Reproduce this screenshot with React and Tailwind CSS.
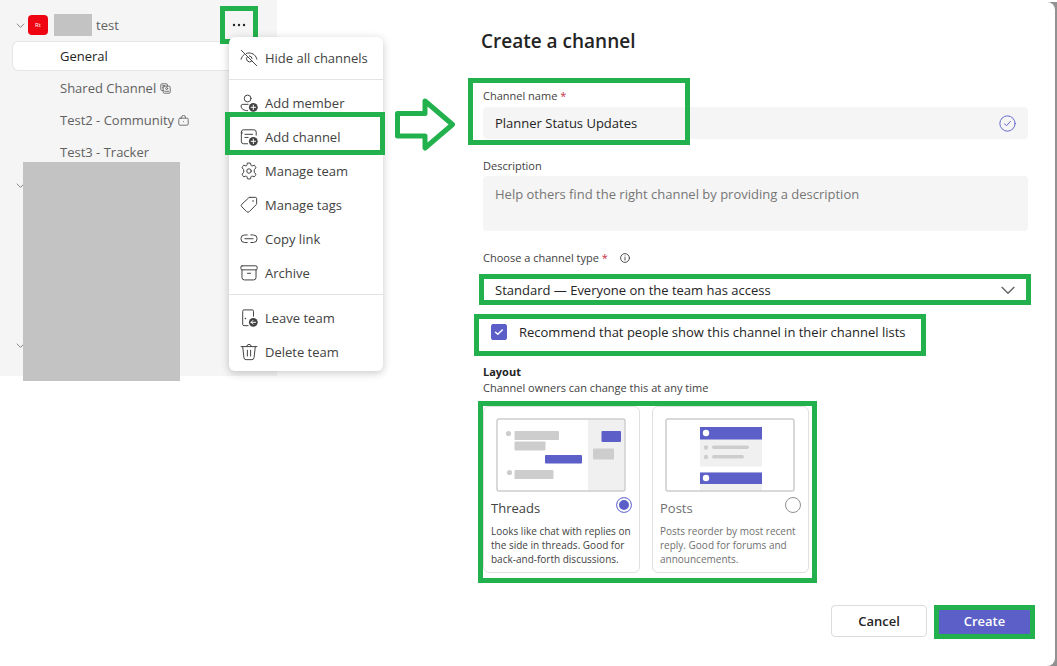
import { useState } from "react";

const FRAME = "pointer-events-none absolute border-5 border-[#22b14c]";

function Frame({ className }) {
  return <span aria-hidden="true" className={`${FRAME} ${className}`} />;
}

function Icon({ children, className = "size-[18px]", width = 1.1, box = "0 0 20 20" }) {
  return (
    <svg
      viewBox={box}
      className={`shrink-0 ${className}`}
      fill="none"
      stroke="currentColor"
      strokeWidth={width}
      strokeLinecap="round"
      strokeLinejoin="round"
      aria-hidden="true"
    >
      {children}
    </svg>
  );
}

function Chevron({ className }) {
  return (
    <Icon className={className} box="0 0 12 12" width={1}>
      <path d="M1.5 4 6 8.5 10.5 4" />
    </Icon>
  );
}

const icons = {
  hide: (
    <Icon>
      <path d="M1.5 1.5l17 17M7.1 4.9A9.5 9.5 0 0 1 10 4.4c4.600 0 7.800 3 8.800 7M4.600 6.300C2.900 7.500 1.700 9.300 1.200 11.400M8.200 8.300a3.500 3.500 0 1 0 5 5M10.500 7.600a3.500 3.500 0 0 1 3 3" />
    </Icon>
  ),
  member: (
    <Icon>
      <circle cx="8.500" cy="5" r="3.800" />
      <path d="M9 11.500H3A1.800 1.800 0 0 0 1.200 13.300c0 3.300 3 5.200 7.300 5.200" />
      <circle cx="14.800" cy="14.800" r="4.900" fill="currentColor" stroke="none" />
      <path d="M14.800 12.300v5M12.300 14.800h5" stroke="white" />
    </Icon>
  ),
  channel: (
    <Icon>
      <path d="M8.500 17.500H4A2.500 2.500 0 0 1 1.500 15V4.500A2.500 2.500 0 0 1 4 2h11.500A2.500 2.500 0 0 1 18 4.500V8M1.500 5.500H3M5.500 7h8.500M5.500 10.500H9" />
      <circle cx="14.800" cy="14.800" r="4.900" fill="currentColor" stroke="none" />
      <path d="M14.800 12.300v5M12.300 14.800h5" stroke="white" />
    </Icon>
  ),
  gear: (
    <Icon>
      <path d="M8.300 1.300Q10 .9 11.700 1.300L12.200 3.500Q12.500 4.500 13.600 4.300L15.900 3.500Q17.200 4.800 17.700 6.500L16.100 8.200Q15.400 10 16.100 11.800L17.700 13.500Q17.200 15.200 15.900 16.500L13.600 15.700Q12.500 15.500 12.200 16.500L11.700 18.700Q10 19.100 8.300 18.700L7.800 16.500Q7.500 15.500 6.400 15.700L4.100 16.500Q2.800 15.200 2.300 13.500L3.900 11.800Q4.600 10 3.900 8.200L2.300 6.500Q2.800 4.800 4.100 3.500L6.400 4.300Q7.500 4.500 7.800 3.500Z" />
      <circle cx="10" cy="10" r="2.500" />
    </Icon>
  ),
  tag: (
    <Icon>
      <path d="M11 1.500h6A1.500 1.500 0 0 1 18.500 3v5.300a2 2 0 0 1-.6 1.400l-7.600 7.700a2 2 0 0 1-2.800 0L2 12a2 2 0 0 1 0-2.800L9.600 2.100a2 2 0 0 1 1.400-.6Z" />
      <circle cx="14.500" cy="5.500" r=".9" fill="currentColor" stroke="none" />
    </Icon>
  ),
  link: (
    <Icon>
      <path d="M8 5.500H5.200a4.200 4.200 0 0 0 0 8.400H8M12 5.500h2.800a4.200 4.200 0 0 1 0 8.400H12M5.500 9.700h9" />
    </Icon>
  ),
  archive: (
    <Icon>
      <rect x="1" y="2" width="18" height="4.500" rx="1.300" />
      <path d="M2.200 6.500V15a2.700 2.700 0 0 0 2.700 2.700h10.200a2.700 2.700 0 0 0 2.700-2.700V6.500M8.300 10.300h3.400" />
    </Icon>
  ),
  leave: (
    <Icon>
      <path d="M9 18.500H4.500A1.500 1.500 0 0 1 3 17V2.500A1.500 1.500 0 0 1 4.500 1h9A1.500 1.500 0 0 1 15 2.500V8" />
      <circle cx="6" cy="10.500" r=".9" fill="currentColor" stroke="none" />
      <circle cx="14.800" cy="14.800" r="4.900" fill="currentColor" stroke="none" />
      <path d="M17.300 14.800h-5m2-2-2 2 2 2" stroke="white" />
    </Icon>
  ),
  trash: (
    <Icon>
      <path d="M1.200 4h17.600M7.500 4a2.500 2.500 0 0 1 5 0M3 4l1.400 12.300A2.400 2.400 0 0 0 6.800 18.500h6.400a2.400 2.400 0 0 0 2.400-2.200L17 4M8.200 8v6.500M11.800 8v6.500" />
    </Icon>
  ),
};

const menuGroups = [
  [{ icon: "hide", label: "Hide all channels" }],
  [
    { icon: "member", label: "Add member" },
    { icon: "channel", label: "Add channel", framed: true },
    { icon: "gear", label: "Manage team" },
    { icon: "tag", label: "Manage tags" },
    { icon: "link", label: "Copy link" },
    { icon: "archive", label: "Archive" },
  ],
  [
    { icon: "leave", label: "Leave team" },
    { icon: "trash", label: "Delete team" },
  ],
];

function TeamMenu() {
  return (
    <div
      role="menu"
      className="absolute top-[37px] left-[229px] w-[154px] rounded-md bg-white pt-1 pb-0.5 text-[#424242] shadow-[0_2px_8px_rgba(0,0,0,0.22)]"
    >
      {menuGroups.map((group, i) => (
        <div key={i} className={i ? "mt-1 border-t border-[#e3e3e3] pt-1.5" : ""}>
          {group.map((item) => (
            <button
              key={item.label}
              role="menuitem"
              className="relative flex h-[34px] w-full items-center gap-[7px] pl-[11px] text-left whitespace-nowrap"
            >
              {icons[item.icon]}
              {item.label}
              {item.framed && <Frame className="-top-2 -right-0.5 -bottom-px -left-1" />}
            </button>
          ))}
        </div>
      ))}
    </div>
  );
}

function ChannelLink({ label, icon, active }) {
  return (
    <a
      href="#"
      className={`ml-3 flex items-center gap-1 pl-[47px] ${
        active
          ? "my-px h-[30px] rounded-l-md border border-r-0 border-[#e6e6e6] bg-white text-[#242424]"
          : "h-8 border-l border-transparent"
      }`}
    >
      {label}
      {icon}
    </a>
  );
}

function Sidebar() {
  return (
    <div className="relative h-[376px] w-[388px] shrink-0 bg-white">
      <nav aria-label="Teams" className="h-full w-[277px] bg-[#f5f5f5] pt-2.5 text-[#616161]">
        <div className="flex h-[30px] items-center pl-4">
          <Chevron className="size-[9px]" />
          <span className="ml-[3px] flex size-5 items-center justify-center rounded bg-[#ee0511] text-[6px] text-white">
            Rt
          </span>
          <span className="ml-[6px] h-[22px] w-[38px] bg-[#c3c3c3]" />
          <span className="ml-1">test</span>
          <button aria-label="More options" className="relative ml-auto mr-[30px] h-6 w-4 text-[#242424]">
            <svg viewBox="0 0 16 4" className="w-4" fill="currentColor" aria-hidden="true">
              <circle cx="3" cy="2" r="1.200" />
              <circle cx="8" cy="2" r="1.200" />
              <circle cx="13" cy="2" r="1.200" />
            </svg>
            <Frame className="-inset-x-[11px] -inset-y-[7px]" />
          </button>
        </div>
        <ChannelLink label="General" active />
        <ChannelLink
          label="Shared Channel"
          icon={
            <Icon className="size-[11px]" box="0 0 14 14">
              <path d="M4 9.500H2.500a1.500 1.500 0 0 1-1.500-1.500V2.500A1.500 1.500 0 0 1 2.500 1H8a1.500 1.500 0 0 1 1.500 1.500V4M3 3.500h3" />
              <rect x="4" y="4" width="9" height="9" rx="1.500" />
              <circle cx="8.500" cy="7" r="1.300" />
              <path d="M6 10.500h5M3 6h1" />
            </Icon>
          }
        />
        <ChannelLink
          label="Test2 - Community"
          icon={
            <Icon className="size-[11px]" box="0 0 14 14">
              <rect x="1" y="4" width="12" height="9" rx="1.700" />
              <path d="M4.500 4V3a2.500 2.500 0 0 1 5 0v1M7 8.500h.1" />
            </Icon>
          }
        />
        <ChannelLink label="Test3 - Tracker" />
        <Chevron className="absolute top-[181px] left-4 size-[9px]" />
        <Chevron className="absolute top-[341px] left-4 size-[9px]" />
        <span className="absolute top-[162px] left-[23px] h-[219px] w-[157px] bg-[#c3c3c3]" />
      </nav>
      <TeamMenu />
      <svg viewBox="0 0 62 56" className="absolute top-[96px] left-[394px] h-14 w-[62px]" aria-hidden="true">
        <path
          d="M3.500 17.500H31V5L58.500 28.500 31 52V40H3.500Z"
          fill="none"
          stroke="#22b14c"
          strokeWidth="5"
          strokeLinejoin="round"
        />
      </svg>
    </div>
  );
}

function ThreadsArt() {
  return (
    <svg viewBox="0 0 130 74" className="h-[74px] w-[130px]" aria-hidden="true">
      <rect x="1" y="1" width="128" height="72" rx="2" fill="white" />
      <path d="M92 1h36v72H92Z" fill="#f0f0f0" />
      <g fill="#cdcdcd">
        <circle cx="12.500" cy="15.500" r="2.600" />
        <rect x="18.500" y="13" width="44.500" height="9" rx="1" />
        <rect x="18.500" y="23.500" width="31" height="9" rx="1" />
        <rect x="97" y="30.500" width="21" height="11" rx="1" />
        <circle cx="13.500" cy="54.500" r="2.600" />
        <rect x="18.500" y="52" width="39" height="9" rx="1" />
      </g>
      <rect x="105.500" y="13" width="19.500" height="11" rx="1" fill="#5b5fc7" />
      <rect x="49" y="37" width="37" height="8.500" rx="1" fill="#5b5fc7" />
      <rect x="1" y="1" width="128" height="72" rx="2" fill="none" stroke="#cdcdcd" strokeWidth="1.500" />
    </svg>
  );
}

function PostsArt() {
  return (
    <svg viewBox="0 0 130 74" className="h-[74px] w-[130px]" aria-hidden="true">
      <path d="M35 9h62v39.500H35ZM35 54h62v19H35Z" fill="#f0f0f0" />
      <path d="M35 9h62v12.500H35ZM35 54.500h62v11.500H35Z" fill="#5b5fc7" />
      <circle cx="41" cy="15" r="3.200" fill="white" />
      <circle cx="41" cy="60" r="3.200" fill="white" />
      <g fill="#cdcdcd">
        <circle cx="41" cy="29.500" r="2.200" />
        <circle cx="41" cy="39" r="2.200" />
        <rect x="47" y="27.500" width="37" height="3.500" rx="1.700" />
        <rect x="47" y="37" width="32" height="3.500" rx="1.700" />
      </g>
      <rect x="1" y="1" width="128" height="72" rx="2" fill="none" stroke="#cdcdcd" strokeWidth="1.500" />
    </svg>
  );
}

function LayoutCard({ value, title, text, art, checked, onChange }) {
  return (
    <label
      className={`block h-[167px] w-[157px] rounded-md border border-[#e0e0e0] pt-[11px] pl-[7px] ${
        checked ? "text-[#424242]" : "text-[#707070]"
      }`}
    >
      <span className="block pl-[5px]">{art}</span>
      <span className="flex items-start justify-between pt-[3px] pr-[7px]">
        <span className="pt-[3px] leading-5">{title}</span>
        <input
          type="radio"
          name="layout"
          value={value}
          checked={checked}
          onChange={onChange}
          className="mt-0.5 size-4 appearance-none rounded-full border border-[#919191] bg-white checked:border-[#7b7fd6] checked:bg-[#5b5fc7] checked:shadow-[inset_0_0_0_2px_white]"
        />
      </span>
      <span className="block pt-1.5 text-[10px] leading-[14px] whitespace-pre-line">{text}</span>
    </label>
  );
}

function CreateChannel() {
  const [name, setName] = useState("Planner Status Updates");
  const [layout, setLayout] = useState("threads");
  return (
    <form
      onSubmit={(e) => e.preventDefault()}
      className="flex min-w-0 flex-1 flex-col pt-[25px] pr-[27px] pb-[26px] pl-[95px] text-[#242424]"
    >
      <h1 className="-ml-0.5 text-[19px] leading-7 font-semibold">Create a channel</h1>

      <div className="relative mt-[33px] flex flex-col">
        <label htmlFor="name" className="text-[11px] leading-4 text-[#424242]">
          Channel name <span className="text-[#c4314b]">*</span>
        </label>
        <div className="mt-[3px] flex h-8 items-center rounded bg-[#f5f5f5] pr-3 pl-3">
          <input
            id="name"
            value={name}
            onChange={(e) => setName(e.target.value)}
            className="min-w-0 flex-1 bg-transparent outline-none"
          />
          <Icon className="size-[17px] text-[#5b5fc7]">
            <circle cx="10" cy="10" r="9" />
            <path d="M6.500 10.500 9 12.500l4.500-5" />
          </Icon>
        </div>
        <Frame className="-top-2.5 -left-[15px] h-[67px] w-[222px]" />
      </div>

      <label htmlFor="description" className="mt-[19px] text-[11px] leading-4 text-[#424242]">
        Description
      </label>
      <textarea
        id="description"
        placeholder="Help others find the right channel by providing a description"
        className="mt-0.5 h-[55px] resize-none rounded bg-[#f5f5f5] px-3 py-2 leading-5 outline-none placeholder:text-[#757575]"
      />

      <div className="mt-[19px] flex items-center text-[11px] leading-4 text-[#424242]">
        <label htmlFor="type">
          Choose a channel type <span className="text-[#c4314b]">*</span>
        </label>
        <Icon className="ml-3 size-[10px]" box="0 0 12 12">
          <circle cx="6" cy="6" r="5.300" />
          <path d="M6 5.500v3M6 3.500v.1" />
        </Icon>
      </div>
      <div className="relative mt-[9px] flex h-[30px] items-center">
        <select
          id="type"
          className="h-full w-full appearance-none rounded bg-white pl-3 outline-none"
        >
          <option>Standard — Everyone on the team has access</option>
        </select>
        <Chevron className="pointer-events-none absolute right-3 size-4 text-[#616161]" />
        <Frame className="-top-px -right-[3px] bottom-0 -left-1" />
      </div>

      <div className="relative mt-[17px] flex h-5 items-center self-start pl-2">
        <span className="relative flex">
          <input
            id="recommend"
            type="checkbox"
            defaultChecked
            className="peer size-4 appearance-none rounded-xs border border-[#5b5fc7] checked:bg-[#5b5fc7]"
          />
          <Icon
            className="pointer-events-none invisible absolute inset-0 size-4 text-white peer-checked:visible"
            box="0 0 16 16"
            width={1.5}
          >
            <path d="m4.500 8.300 2.300 2 4.500-4.300" />
          </Icon>
        </span>
        <label htmlFor="recommend" className="pl-3 whitespace-nowrap">
          Recommend that people show this channel in their channel lists
        </label>
        <Frame className="-top-2 -right-5 -bottom-3.5 -left-[9px]" />
      </div>

      <fieldset className="mt-[22px]">
        <legend className="text-[11px] leading-4 font-bold">Layout</legend>
        <p className="text-[11px] leading-4 text-[#424242]">Channel owners can change this at any time</p>
        <div className="relative mt-2.5 flex w-[326px] justify-between">
          <LayoutCard
            value="threads"
            title="Threads"
            text={"Looks like chat with replies on\nthe side in threads. Good for\nback-and-forth discussions."}
            art={<ThreadsArt />}
            checked={layout === "threads"}
            onChange={() => setLayout("threads")}
          />
          <LayoutCard
            value="posts"
            title="Posts"
            text={"Posts reorder by most recent\nreply. Good for forums and\nannouncements."}
            art={<PostsArt />}
            checked={layout === "posts"}
            onChange={() => setLayout("posts")}
          />
          <Frame className="-top-[5px] -right-2 -bottom-2.5 -left-[5px]" />
        </div>
      </fieldset>

      <div className="mt-8 -mr-0.5 flex justify-end gap-3 font-semibold">
        <button type="button" className="h-8 w-24 rounded border border-[#dcdcdc] bg-white">
          Cancel
        </button>
        <button type="submit" className="relative h-8 w-[91px] rounded bg-[#5b5fc7] text-white">
          Create
          <Frame className="-inset-x-[5px] top-0 -bottom-0.5" />
        </button>
      </div>
    </form>
  );
}

export default function App() {
  return (
    <div className="flex min-h-screen flex-col bg-white font-['Open_Sans','Noto_Sans',sans-serif] text-[13px] leading-5">
      <div className="mt-0.5 flex flex-1 bg-[#929292] pr-0.5">
        <div className="flex min-w-0 flex-1 rounded-r-lg bg-white">
          <div className="-mt-0.5">
            <Sidebar />
          </div>
          <CreateChannel />
        </div>
      </div>
    </div>
  );
}
